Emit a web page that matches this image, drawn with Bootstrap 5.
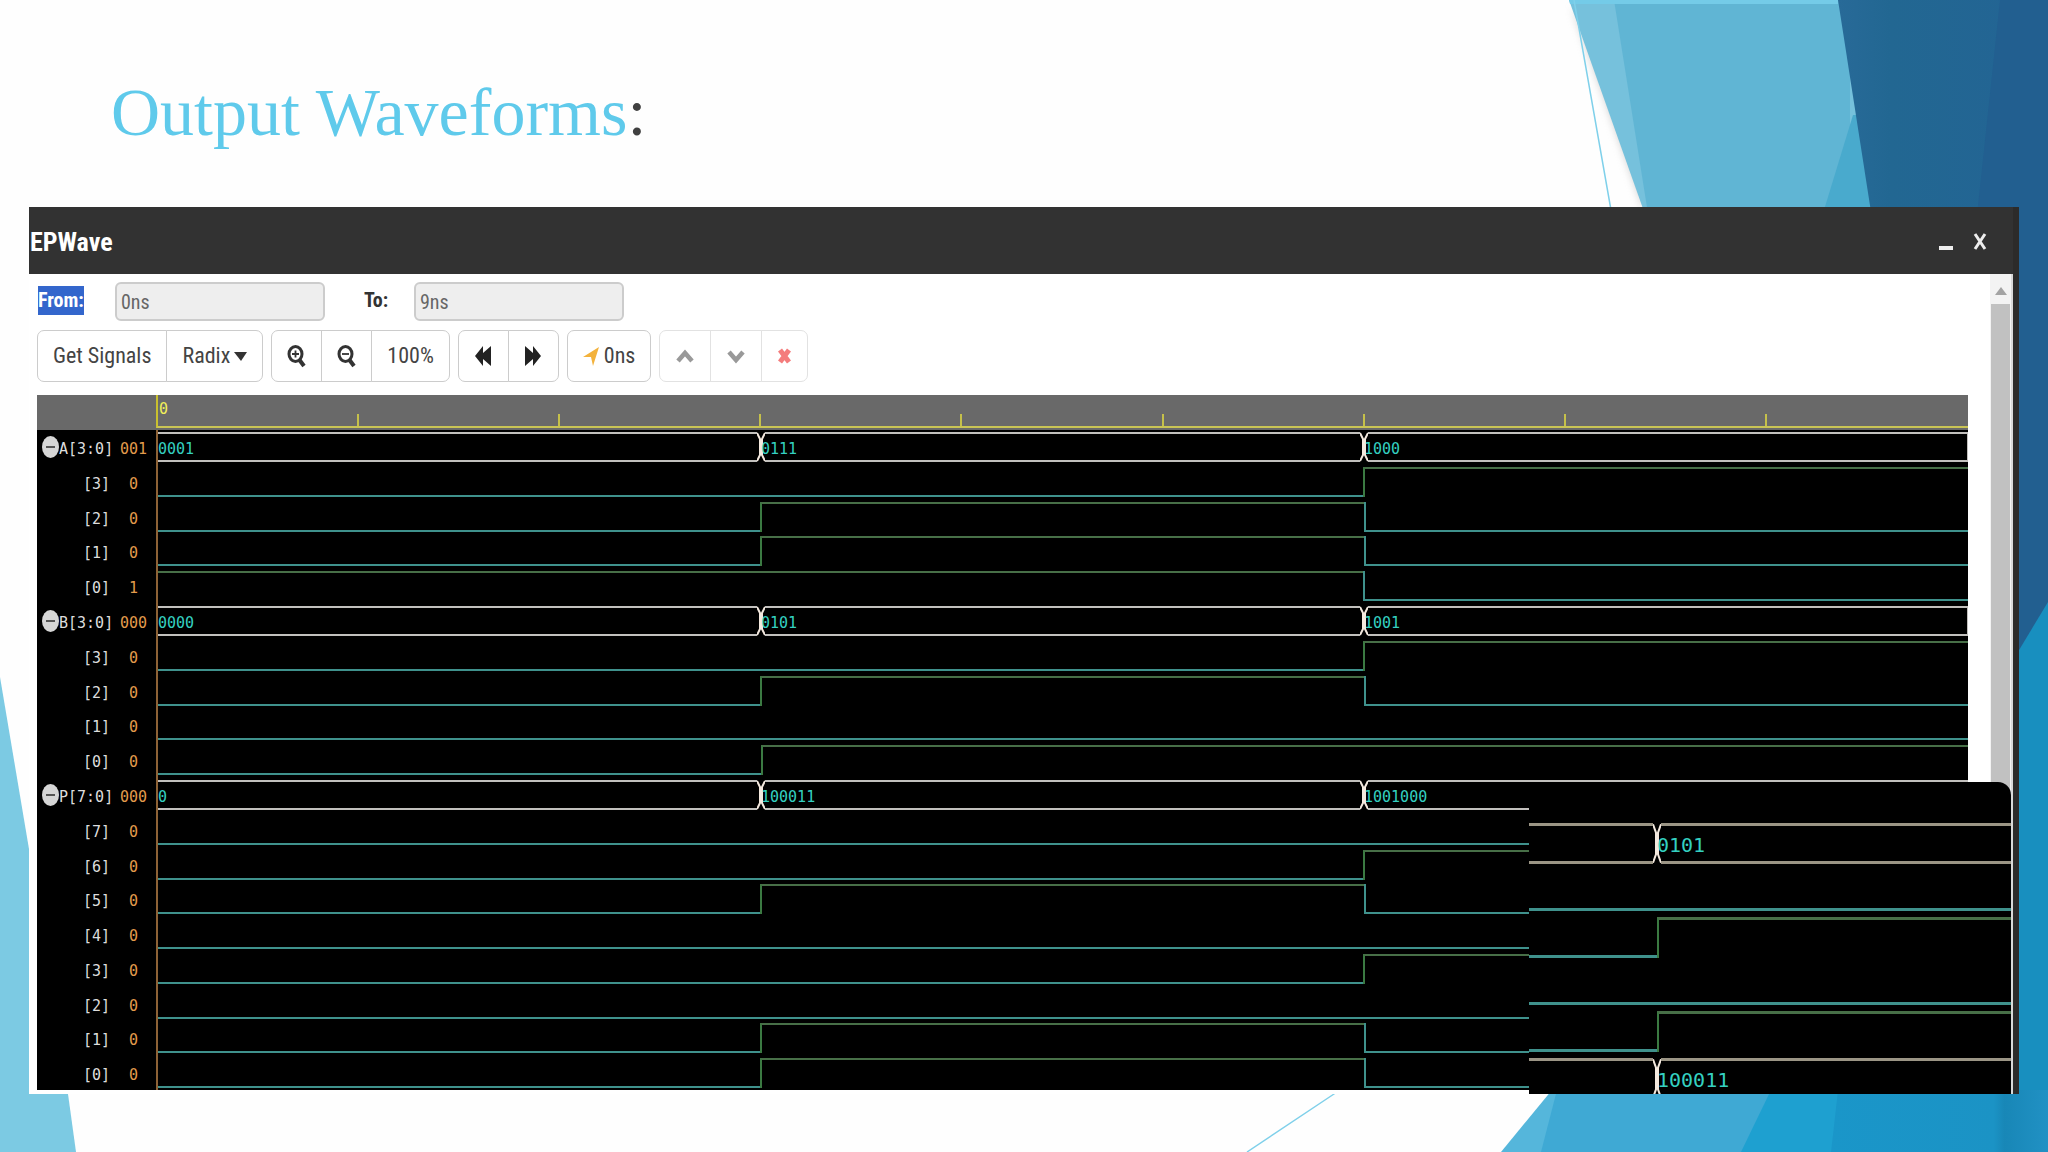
<!DOCTYPE html>
<html lang="en">
<head>
<meta charset="utf-8">
<meta name="viewport" content="width=device-width, initial-scale=1">
<title>Output Waveforms</title>
<link href="https://cdn.jsdelivr.net/npm/bootstrap@5.3.0/dist/css/bootstrap.min.css" rel="stylesheet">
<style>
:root { --ui: "Roboto Condensed", Roboto, "Liberation Sans", sans-serif; --mono: "DejaVu Sans Mono", monospace; }
body { background: #fefefe; font-family: var(--ui); }
.slide { overflow: hidden; }
.backdrop { position: absolute; inset: 0; width: 100%; height: 100%; }
.slide-title { font: 400 68px/80px "Liberation Serif", serif; color: #5fcaeb; padding: 72px 111px 55px; }
.slide-title span { color: #404040; }
.viewer { margin: 0 29px 58px; background: #fff; border-right: 6px solid #2c2b2a; }
.viewer-bar { background: #323232; height: 67px; padding: 2px 24px 0 1px; }
.viewer-bar h2 { font: 700 26px/30px var(--ui); color: #fff; }
.bar-btn { background: none; border: 0; padding: 0; width: 18px; height: 30px; color: #eee; }
.viewer-body { border-right: 2px solid #d9d9d9; }
.fields { padding: 8px 0 0 9px; }
.fields label { font-size: 20px; line-height: 29px; font-weight: 700; color: #333; }
.fields .label-cell { width: 77px; }
.fields .to-cell { width: 89px; padding-left: 39px; }
.fields .picked { background: #3366cc; color: #fff; }
.time-box { width: 210px; height: 39px; padding: 0 4px; font-size: 20px; color: #666; background: #eee !important; border: 2px solid #ccc; border-radius: 6px; }
.tools { padding: 9px 0 13px 8px; gap: 8px; }
.tools .btn { height: 52px; padding: 0 15px; font-size: 22px; line-height: 48px; color: #444; background: #fff; border: 1px solid #ccc; border-radius: 7px; }
.tools .btn svg { display: block; }
.tools .faded .btn { border-color: #e2e2e2; }
.scope-wrap { padding: 0 43px 4px 8px; }
.scope { background: #000; }
.ruler { height: 35px; background: #696969; }
.name-col { width: 119px; flex: none; }
.ticks { border-left: 2px solid #c9c02e; border-bottom: 2px solid #c9c455; height: 33px; }
.tick { flex: 1 1 0; border-right: 2px solid #c5c04a; height: 12px; align-self: flex-end; }
.tick:last-child { border-color: transparent; }
.zero { position: absolute; left: 1px; top: 0; font: 15px/29px var(--mono); color: #f1f05a; }
.signals { height: 660px; padding-top: 2px; overflow: hidden; font: 15px/35px var(--mono); background: linear-gradient(#8d6236, #8d6236) 119px 0 / 2px 100% no-repeat; }
.group5 { height: 174px; }
.group9 { height: 313px; }
.sig { flex: 1 1 0; min-height: 0; }
.sig .name-col { color: #ddd; padding: 0 9px 0 5px; }
.sig .bit { width: 68px; text-align: right; flex: none; }
.sig .num { color: #e39b4c; width: 27px; text-align: center; margin-left: auto; }
.fold { width: 17px; height: 22px; margin-top: 4px; padding: 0; border: 0; background: none; line-height: 0; flex: none; }
.trace { height: 30px; padding-left: 2px; }
.seg { flex: 1 1 0; position: relative; color: #34d0c1; white-space: nowrap; }
.lo { border-bottom: 2px solid #3f918c; }
.hi { border-top: 2px solid #476f47; }
.rise { border-left: 2px solid #3b7a42; }
.fall { border-left: 2px solid #3f918c; }
.bus { border-top: 2px solid #c2c0bd; border-bottom: 2px solid #c2c0bd; line-height: 30px; }
.signals .bus:last-child { border-right: 1px solid #c2c0bd; }
.cross { position: absolute; left: -4px; top: -2px; width: 8px; height: calc(100% + 4px); background: #000; }
.cross path { fill: none; stroke: #f4e9df; stroke-width: 2; vector-effect: non-scaling-stroke; }
.seg b { font-weight: 400; position: relative; }
.track { position: absolute; right: 0; top: 0; bottom: 0; width: 21px; background: #f3f3f3; padding: 13px 1px 0; }
.track svg { display: block; margin: 0 auto 9px; }
.thumb { background: #c1c1c1; }
.inset { position: absolute; right: 0; bottom: 0; width: 482px; height: 312px; background: #000; border-top-right-radius: 13px; overflow: hidden; padding-top: 41px; }
.inset .cell { height: 47px; }
.inset .trace { height: 41px; padding: 0; }
.inset .seg { flex: 0 0 128px; font: 20px/39px var(--mono); }
.inset .seg:last-child { flex: 1 1 0; }
.inset .lo { border-bottom-width: 3px; }
.inset .hi { border-top-width: 3px; }
.inset .bus { border-width: 3px 0; border-color: #9b9585; }
.inset .cross { top: -3px; height: calc(100% + 6px); }
</style>
</head>
<body>
<main class="slide position-relative min-vh-100">
<svg class="backdrop" viewBox="0 0 2048 1152" preserveAspectRatio="none" aria-hidden="true">
  <defs>
    <linearGradient id="deep" x1="0" x2="1"><stop offset="0" stop-color="#286a98"/><stop offset=".25" stop-color="#226792"/><stop offset="1" stop-color="#236494"/></linearGradient>
    <linearGradient id="side" x1="0" x2="1"><stop offset="0" stop-color="#1a96c9"/><stop offset=".75" stop-color="#1b93c5"/><stop offset=".8" stop-color="#1887b7"/><stop offset="1" stop-color="#2191c4"/></linearGradient>
    <filter id="soft"><feGaussianBlur stdDeviation="4"/></filter>
  </defs>
  <path d="M1572 6 1646 215V100z" fill="#999" opacity=".5" filter="url(#soft)"/>
  <path d="M1569 0H1850L1880 220H1647z" fill="#76c1dc"/>
  <path d="M1614 0H1850V220H1649z" fill="#60b5d4"/>
  <path d="M1853 115 1824 210H1875V115z" fill="#49aacd"/>
  <path d="M1838 0H2048V620L2019 655H1940z" fill="url(#deep)"/>
  <path d="M2000 0H2048V610L2019 655H1930z" fill="#225f90"/>
  <path d="M1569 0H1838V4H1570z" fill="#74cbe8"/>
  <path d="M2048 602V1152H1960V748z" fill="#188fbf"/>
  <path d="M1574 0 1611 210M1247 1152 1337 1092" stroke="#7fd0ea" stroke-width="1.5" fill="none"/>
  <path d="M1552 1090 1501 1152H2048V1090z" fill="#55b6db"/>
  <path d="M1557 1090 1541 1152H2048V1090z" fill="#3fa9d4"/>
  <path d="M1771 1090 1741 1152H2048V1090z" fill="#1ea0d0"/>
  <path d="M1838 1090 1831 1152H2048V1090z" fill="url(#side)"/>
  <path d="M0 677 30 855 68 1094 76 1152H0z" fill="#7ccae3"/>
</svg>
<div class="position-relative">
<h1 class="slide-title m-0">Output Waveforms<span>:</span></h1>
<section class="viewer">
  <header class="viewer-bar d-flex align-items-center justify-content-between">
    <h2 class="m-0">EPWave</h2>
    <div class="d-flex gap-3">
      <button class="bar-btn" aria-label="Minimize"><svg width="14" height="30"><path d="M0 19h14v4H0z" fill="#eee"/></svg></button>
      <button class="bar-btn" aria-label="Close"><svg width="14" height="30"><path d="M2 7 12 22M12 7 2 22" stroke="#eee" stroke-width="3"/></svg></button>
    </div>
  </header>
  <div class="viewer-body position-relative">
    <form class="fields d-flex align-items-start">
      <div class="label-cell"><label class="picked mt-1" for="from">From:</label></div>
      <input class="time-box form-control" id="from" value="0ns" readonly>
      <div class="to-cell"><label class="mt-1" for="to">To:</label></div>
      <input class="time-box form-control" id="to" value="9ns" readonly>
    </form>
    <div class="tools d-flex">
      <div class="btn-group"><button class="btn">Get Signals</button><button class="btn d-flex align-items-center gap-1">Radix <svg width="13" height="9"><path d="M0 0h13L7 9z" fill="#333"/></svg></button></div>
      <div class="btn-group">
        <button class="btn" aria-label="Zoom in"><svg width="19" height="24" viewBox="0 0 19 24"><ellipse cx="8.500" cy="10" rx="6.500" ry="7.500" fill="none" stroke="#333" stroke-width="3"/><path d="M12.500 16 17 22" stroke="#333" stroke-width="4"/><path d="M5 10h7M8.500 6.500v7" stroke="#333" stroke-width="1.800"/></svg></button>
        <button class="btn" aria-label="Zoom out"><svg width="19" height="24" viewBox="0 0 19 24"><ellipse cx="8.500" cy="10" rx="6.500" ry="7.500" fill="none" stroke="#333" stroke-width="3"/><path d="M12.500 16 17 22" stroke="#333" stroke-width="4"/><path d="M5 10h7" stroke="#333" stroke-width="1.800"/></svg></button>
        <button class="btn">100%</button>
      </div>
      <div class="btn-group">
        <button class="btn" aria-label="Previous edge"><svg width="19" height="22" viewBox="0 0 19 22"><path d="M1 11 9 1V8L17 1V21L9 14V21z" fill="#222"/></svg></button>
        <button class="btn" aria-label="Next edge"><svg width="19" height="22" viewBox="0 0 19 22"><path d="M17 11 9 1V8L1 1V21L9 14V21z" fill="#222"/></svg></button>
      </div>
      <button class="btn d-flex align-items-center gap-1"><svg width="17" height="21" viewBox="0 0 17 21"><path d="M16 1 10 20 8 11 0 11z" fill="#f3b23c"/></svg>0ns</button>
      <div class="btn-group faded">
        <button class="btn" aria-label="Move up"><svg width="20" height="16" viewBox="0 0 20 16"><path d="M3 13 10 5 17 13" fill="none" stroke="#999" stroke-width="4.500"/></svg></button>
        <button class="btn" aria-label="Move down"><svg width="20" height="16" viewBox="0 0 20 16"><path d="M3 4 10 12 17 4" fill="none" stroke="#999" stroke-width="4.500"/></svg></button>
        <button class="btn" aria-label="Remove"><svg width="15" height="18" viewBox="0 0 15 18"><path d="M3 3 12 15M12 3 3 15" stroke="#f47c7c" stroke-width="5"/></svg></button>
      </div>
    </div>
    <div class="scope-wrap"><div class="scope">
      <div class="ruler d-flex"><div class="name-col"></div><div class="ticks d-flex flex-fill position-relative"><span class="zero">0</span><i class="tick"></i><i class="tick"></i><i class="tick"></i><i class="tick"></i><i class="tick"></i><i class="tick"></i><i class="tick"></i><i class="tick"></i><i class="tick"></i></div></div>
      <div class="signals" id="signals"></div>
    </div></div>
    <div class="track d-flex flex-column"><svg width="12" height="8"><path d="M6 0 12 8H0z" fill="#a3a3a3"/></svg><div class="thumb flex-fill"></div></div>
    <div class="inset" id="inset"></div>
  </div>
</section>
</div>
</main>
<script>
// Each signal: name, value at the cursor, and its level (or bus value) in the three time spans.
const groups = [
  ['group5', [['A[3:0]', '001', ['0001', '0111', '1000']], ['[3]', '0', '001'], ['[2]', '0', '010'], ['[1]', '0', '010'], ['[0]', '1', '110']]],
  ['group5', [['B[3:0]', '000', ['0000', '0101', '1001']], ['[3]', '0', '001'], ['[2]', '0', '010'], ['[1]', '0', '000'], ['[0]', '0', '011']]],
  ['group9', [['P[7:0]', '000', ['0', '100011', '1001000']], ['[7]', '0', '000'], ['[6]', '0', '001'], ['[5]', '0', '010'], ['[4]', '0', '000'], ['[3]', '0', '001'], ['[2]', '0', '000'], ['[1]', '0', '010'], ['[0]', '0', '010']]]
];
const cross = '<svg class="cross" viewBox="0 0 8 30" preserveAspectRatio="none"><path d="M0 1 3 7V23L0 29M8 1 5 7V23L8 29"/></svg>';
const trace = w => '<div class="trace d-flex flex-fill">' + [...w].map((v, i) => {
  if (Array.isArray(w)) return `<div class="seg bus">${i ? cross : ''}<b>${v}</b></div>`;
  const edge = i && v !== w[i - 1] ? (v === '1' ? ' rise' : ' fall') : '';
  return `<div class="seg ${v === '1' ? 'hi' : 'lo'}${edge}"></div>`;
}).join('') + '</div>';
const fold = '<button class="fold" aria-label="Collapse"><svg width="17" height="22"><ellipse cx="8.5" cy="11" rx="8.5" ry="11" fill="#d6d6d6"/><path d="M4 11h9" stroke="#555" stroke-width="2"/></svg></button>';
document.getElementById('signals').innerHTML = groups.map(([cls, rows]) =>
  `<div class="${cls} d-flex flex-column">` + rows.map(([name, value, w]) =>
    `<div class="sig d-flex"><div class="name-col d-flex align-items-start">${Array.isArray(w) ? fold + `<span>${name}</span>` : `<span class="bit">${name}</span>`}<span class="num">${value}</span></div>${trace(w)}</div>`
  ).join('') + '</div>').join('');
document.getElementById('inset').innerHTML =
  [['', '0101'], '00', '01', '00', '01', ['', '100011']].map(w => `<div class="cell d-flex">${trace(w)}</div>`).join('');
</script>
<script src="https://cdn.jsdelivr.net/npm/bootstrap@5.3.0/dist/js/bootstrap.bundle.min.js"></script>
</body>
</html>
